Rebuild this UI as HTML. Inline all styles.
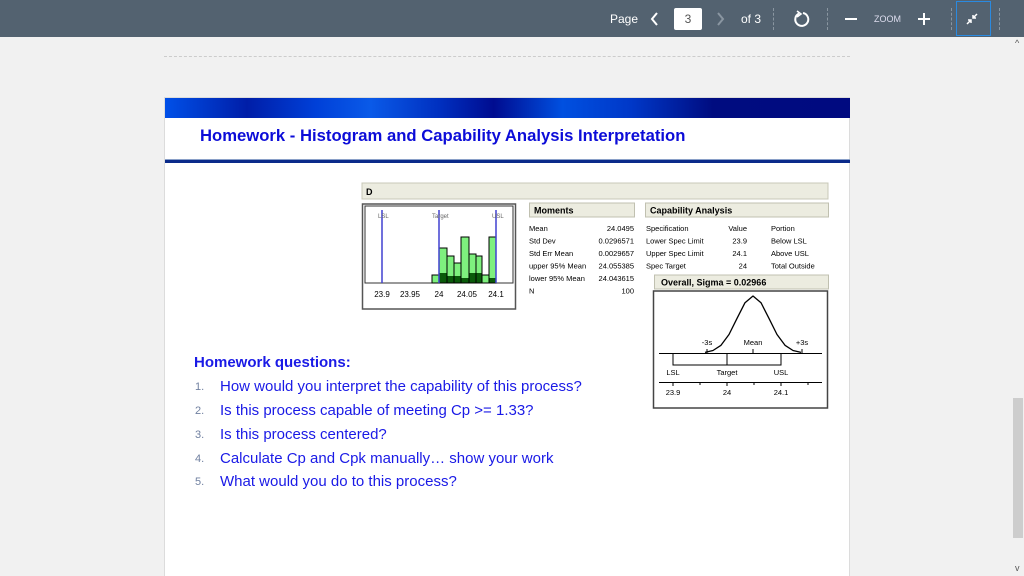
<!DOCTYPE html>
<html><head><meta charset="utf-8"><style>
body{margin:0;width:1024px;height:576px;overflow:hidden;background:#f1f1f1;font-family:"Liberation Sans",sans-serif;position:relative}
.a{position:absolute;white-space:nowrap}
.tb{position:absolute;left:0;top:0;width:1024px;height:37px;background:#536270}
.sep{position:absolute;top:8px;height:22px;border-left:1px dashed #8a96a1}
.q{font-size:15px;color:#1a1ae6}
.n{font-size:11px;color:#7080a0}
.m{font-size:8px;color:#000}
</style></head><body>
<div class="tb">
<div class="a" style="left:610px;top:12px;font-size:12px;color:#fff">Page</div>
<svg class="a" style="left:650px;top:11px" width="10" height="16"><path d="M7 2 L2 8 L7 14" stroke="#fff" stroke-width="2" fill="none"/></svg>
<div class="a" style="left:674px;top:8px;width:28px;height:22px;background:#fff;border-radius:2px;font-size:12px;color:#555;text-align:center;line-height:22px">3</div>
<svg class="a" style="left:716px;top:11px" width="10" height="16"><path d="M2 2 L7 8 L2 14" stroke="#8a96a1" stroke-width="2" fill="none"/></svg>
<div class="a" style="left:741px;top:12px;font-size:12px;color:#fff">of 3</div>
<div class="sep" style="left:773px"></div>
<svg class="a" style="left:793px;top:10px" width="18" height="18"><path d="M6 3.5 A6.5 6.5 0 1 0 10 3" stroke="#fff" stroke-width="2" fill="none"/><path d="M4 1 L8 4 L4 7" stroke="#fff" stroke-width="1.6" fill="none"/></svg>
<div class="sep" style="left:827px"></div>
<div class="a" style="left:845px;top:18px;width:12px;height:2px;background:#fff"></div>
<div class="a" style="left:874px;top:14px;font-size:9px;color:#dde">ZOOM</div>
<div class="a" style="left:918px;top:18px;width:12px;height:2px;background:#fff"></div>
<div class="a" style="left:923px;top:13px;width:2px;height:12px;background:#fff"></div>
<div class="sep" style="left:951px"></div>
<div class="a" style="left:956px;top:1px;width:35px;height:35px;border:1px solid #2a8ae0;box-sizing:border-box"></div>
<svg class="a" style="left:964px;top:11px" width="16" height="16"><path d="M13 3 L9 7 M9 4 V7 H12 M3 13 L7 9 M4 9 H7 V12" stroke="#fff" stroke-width="1.5" fill="none"/></svg>
<div class="sep" style="left:999px"></div>
</div>
<div class="a" style="left:164px;top:56px;width:686px;border-top:1px dashed #ccc"></div>
<div class="a" style="left:1012px;top:38px;width:12px;height:538px;background:#f1f1f1"></div>
<div class="a" style="left:1013px;top:398px;width:10px;height:140px;background:#cdcdcd"></div>
<div class="a" style="left:1015px;top:38px;font-size:9px;color:#555">^</div>
<div class="a" style="left:1015px;top:563px;font-size:9px;color:#555">v</div>

<div class="a" style="left:164px;top:97px;width:686px;height:479px;background:#fff;border:1px solid #dcdcdc;border-bottom:none;box-sizing:border-box"></div>
<div class="a" style="left:165px;top:98px;width:685px;height:20px;background:linear-gradient(90deg,#0050e8 0%,#001ea8 12%,#0040d8 22%,#0a5ae8 30%,#0030c0 40%,#000c90 48%,#0050e0 58%,#0038c8 68%,#000c80 80%,#000a80 100%)"></div>
<div class="a" style="left:200px;top:126px;font-size:17px;font-weight:bold;color:#0c0cd8;transform:scaleX(0.98);transform-origin:left">Homework - Histogram and Capability Analysis Interpretation</div>
<div class="a" style="left:165px;top:159px;width:685px;height:1px;background:#8aa0c8"></div>
<div class="a" style="left:165px;top:160px;width:685px;height:3px;background:#0a2a8a"></div>

<svg class="a" style="left:0;top:0" width="1024" height="576">
<rect x="362" y="183" width="466" height="16" fill="#ecece0" stroke="#c8c8b8"/>
<text x="366" y="195" font-size="9" font-weight="bold" font-family="Liberation Sans">D</text>
<rect x="362.5" y="204" width="153" height="105" fill="#fff" stroke="#555" stroke-width="1.5"/>
<rect x="365" y="206" width="148" height="77" fill="#fff" stroke="#333"/>
<g stroke="#000" stroke-width="1">
<rect x="432" y="275" width="7" height="8" fill="#7ef07e"/>
<rect x="439" y="248" width="8" height="35" fill="#7ef07e"/>
<rect x="447" y="256" width="7" height="27" fill="#7ef07e"/>
<rect x="454" y="263" width="7" height="20" fill="#7ef07e"/>
<rect x="461" y="237" width="8" height="46" fill="#7ef07e"/>
<rect x="469" y="254" width="7" height="29" fill="#7ef07e"/>
<rect x="476" y="256" width="6" height="27" fill="#7ef07e"/>
<rect x="482" y="275" width="7" height="8" fill="#7ef07e"/>
<rect x="489" y="237" width="7" height="46" fill="#7ef07e"/>
</g>
<g fill="#0a5a0a"><rect x="439.5" y="273" width="7" height="9.5"/><rect x="447.5" y="276" width="6" height="6.5"/><rect x="454.5" y="276" width="6" height="6.5"/><rect x="461.5" y="278" width="7" height="4.5"/><rect x="469.5" y="273" width="6" height="9.5"/><rect x="476.5" y="273" width="5" height="9.5"/><rect x="489.5" y="278" width="6" height="4.5"/></g>
<g stroke="#4040d0" stroke-width="1.5"><line x1="382" y1="210" x2="382" y2="283"/><line x1="439" y1="210" x2="439" y2="283"/><line x1="496" y1="210" x2="496" y2="283"/></g>
<g font-size="6" fill="#666" font-family="Liberation Sans"><text x="378" y="218">LSL</text><text x="432" y="218">Target</text><text x="492" y="218">USL</text></g>
<g font-size="8" fill="#000" font-family="Liberation Sans" text-anchor="middle"><text x="382" y="297">23.9</text><text x="410" y="297">23.95</text><text x="439" y="297">24</text><text x="467" y="297">24.05</text><text x="496" y="297">24.1</text></g>
<rect x="529.5" y="203" width="105" height="14" fill="#ecece0" stroke="#c0c0b0"/>
<text x="534" y="213.5" font-size="9" font-weight="bold" font-family="Liberation Sans">Moments</text>
<g font-size="7.5" font-family="Liberation Sans"><text x="529" y="231">Mean</text><text x="529" y="243.5">Std Dev</text><text x="529" y="256">Std Err Mean</text><text x="529" y="268.5">upper 95% Mean</text><text x="529" y="281">lower 95% Mean</text><text x="529" y="293.5">N</text>
<g text-anchor="end"><text x="634" y="231">24.0495</text><text x="634" y="243.5">0.0296571</text><text x="634" y="256">0.0029657</text><text x="634" y="268.5">24.055385</text><text x="634" y="281">24.043615</text><text x="634" y="293.5">100</text></g>
<text x="646" y="231">Specification</text><text x="646" y="243.5">Lower Spec Limit</text><text x="646" y="256">Upper Spec Limit</text><text x="646" y="268.5">Spec Target</text>
<g text-anchor="end"><text x="747" y="231">Value</text><text x="747" y="243.5">23.9</text><text x="747" y="256">24.1</text><text x="747" y="268.5">24</text></g>
<text x="771" y="231">Portion</text><text x="771" y="243.5">Below LSL</text><text x="771" y="256">Above USL</text><text x="771" y="268.5">Total Outside</text></g>
<rect x="645.5" y="203" width="183" height="14" fill="#ecece0" stroke="#c0c0b0"/>
<text x="650" y="213.5" font-size="9" font-weight="bold" font-family="Liberation Sans">Capability Analysis</text>
<rect x="654.5" y="275" width="174" height="14" fill="#ecece0" stroke="#c0c0b0"/>
<text x="661" y="285.5" font-size="9" font-weight="bold" font-family="Liberation Sans">Overall,  Sigma = 0.02966</text>
<rect x="653.5" y="291" width="174" height="117" fill="#fff" stroke="#444" stroke-width="1.5"/>
<path d="M705 352.4 L713 350.5 L721 345.3 L729 334.5 L737 318.4 L745 302.7 L753 296 L761 302.7 L769 318.4 L777 334.5 L785 345.3 L793 350.5 L801 352.4" stroke="#000" stroke-width="1.3" fill="none" stroke-linejoin="round"/>
<line x1="659" y1="353.5" x2="822" y2="353.5" stroke="#000"/>
<path d="M673 353 V365 H781 V353 M727 353 V365 M707 349 V353 M753 349 V353 M802 349 V353" stroke="#000" fill="none"/>
<line x1="659" y1="382.5" x2="822" y2="382.5" stroke="#000"/>
<path d="M673 382 V386 M700 382 V385 M727 382 V386 M754 382 V385 M781 382 V386 M808 382 V385" stroke="#000"/>
<g font-size="7.5" font-family="Liberation Sans" text-anchor="middle"><text x="707" y="345">-3s</text><text x="753" y="345">Mean</text><text x="802" y="345">+3s</text><text x="673" y="375">LSL</text><text x="727" y="375">Target</text><text x="781" y="375">USL</text><text x="673" y="395">23.9</text><text x="727" y="395">24</text><text x="781" y="395">24.1</text></g>
</svg>

<div class="a q" style="left:194px;top:354px;font-weight:bold">Homework questions:</div>
<div class="a n" style="left:195px;top:381px">1.</div><div class="a q" style="left:220px;top:378px">How would you interpret the capability of this process?</div>
<div class="a n" style="left:195px;top:405px">2.</div><div class="a q" style="left:220px;top:402px">Is this process capable of meeting Cp &gt;= 1.33?</div>
<div class="a n" style="left:195px;top:429px">3.</div><div class="a q" style="left:220px;top:426px">Is this process centered?</div>
<div class="a n" style="left:195px;top:453px">4.</div><div class="a q" style="left:220px;top:450px">Calculate Cp and Cpk manually… show your work</div>
<div class="a n" style="left:195px;top:476px">5.</div><div class="a q" style="left:220px;top:473px">What would you do to this process?</div>
</body></html>
